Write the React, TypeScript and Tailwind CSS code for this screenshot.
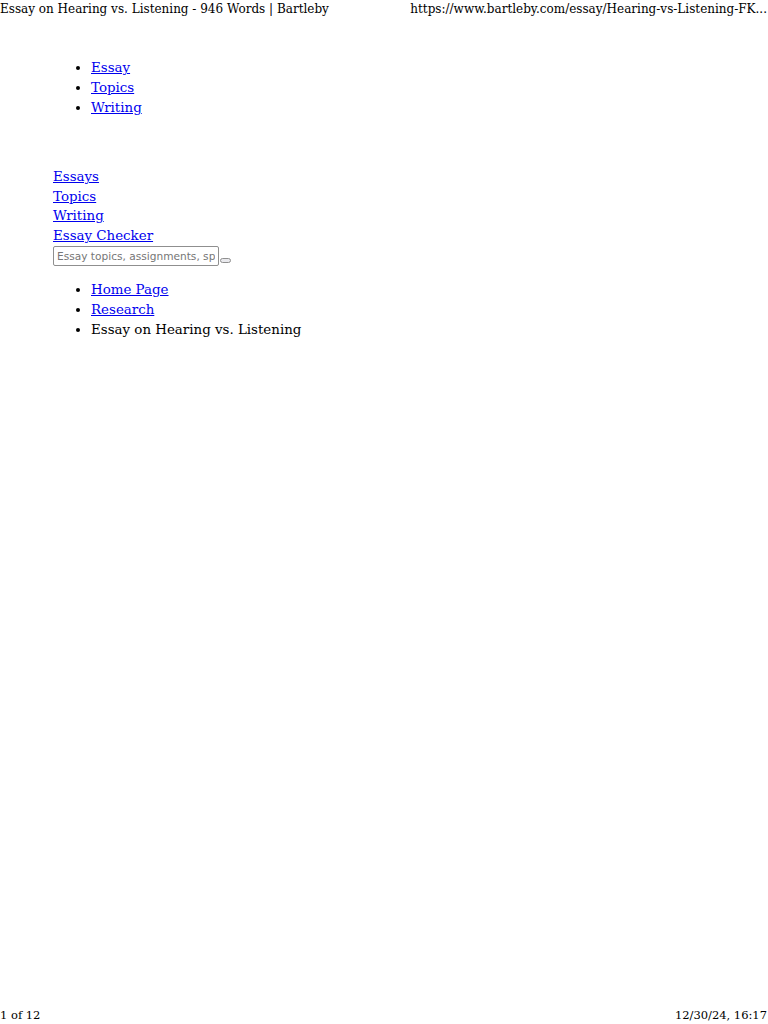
import React from "react";

const serif = { fontFamily: '"DejaVu Serif", serif' } as React.CSSProperties;

export default function App() {
  const link = "text-[#0000ee] underline";
  return (
    <div className="w-[768px] h-[1024px] bg-white text-black flex flex-col relative" style={serif}>
      <div className="flex justify-between items-start text-[12px] leading-[18px] h-[18px] px-0">
        <span>Essay on Hearing vs. Listening - 946 Words | Bartleby</span>
        <span className="pr-[1px]">https://www.bartleby.com/essay/Hearing-vs-Listening-FK...</span>
      </div>
      <div className="flex-1 pl-[53px] text-[13.4px] leading-[20px]">
        <ul className="list-disc pl-[38px] mt-[40px]">
          <li><a className={link}>Essay</a></li>
          <li><a className={link}>Topics</a></li>
          <li><a className={link}>Writing</a></li>
        </ul>
        <div className="mt-[49px] flex flex-col leading-[19.7px]">
          <a className={link}>Essays</a>
          <a className={link}>Topics</a>
          <a className={link}>Writing</a>
          <a className={link}>Essay Checker</a>
        </div>
        <div className="flex items-end mt-[0px]">
          <input
            className="w-[166px] h-[20px] border border-[#8f8f8f] rounded-[2px] px-[3px] text-[10.6px] placeholder:text-[#767676]"
            style={{ fontFamily: '"DejaVu Sans", sans-serif' }}
            placeholder="Essay topics, assignments, sp"
          />
          <button className="w-[11px] h-[5px] border border-[#8f8f8f] bg-[#e9e9ed] rounded-[3px] ml-[1px] mb-[3px]"></button>
        </div>
        <ul className="list-disc pl-[38px] mt-[14px]">
          <li><a className={link}>Home Page</a></li>
          <li><a className={link}>Research</a></li>
          <li>Essay on Hearing vs. Listening</li>
        </ul>
      </div>
      <div className="flex justify-between text-[11.5px] leading-[18px] h-[18px] mb-[0px]">
        <span>1 of 12</span>
        <span className="pr-[1px]">12/30/24, 16:17</span>
      </div>
    </div>
  );
}
